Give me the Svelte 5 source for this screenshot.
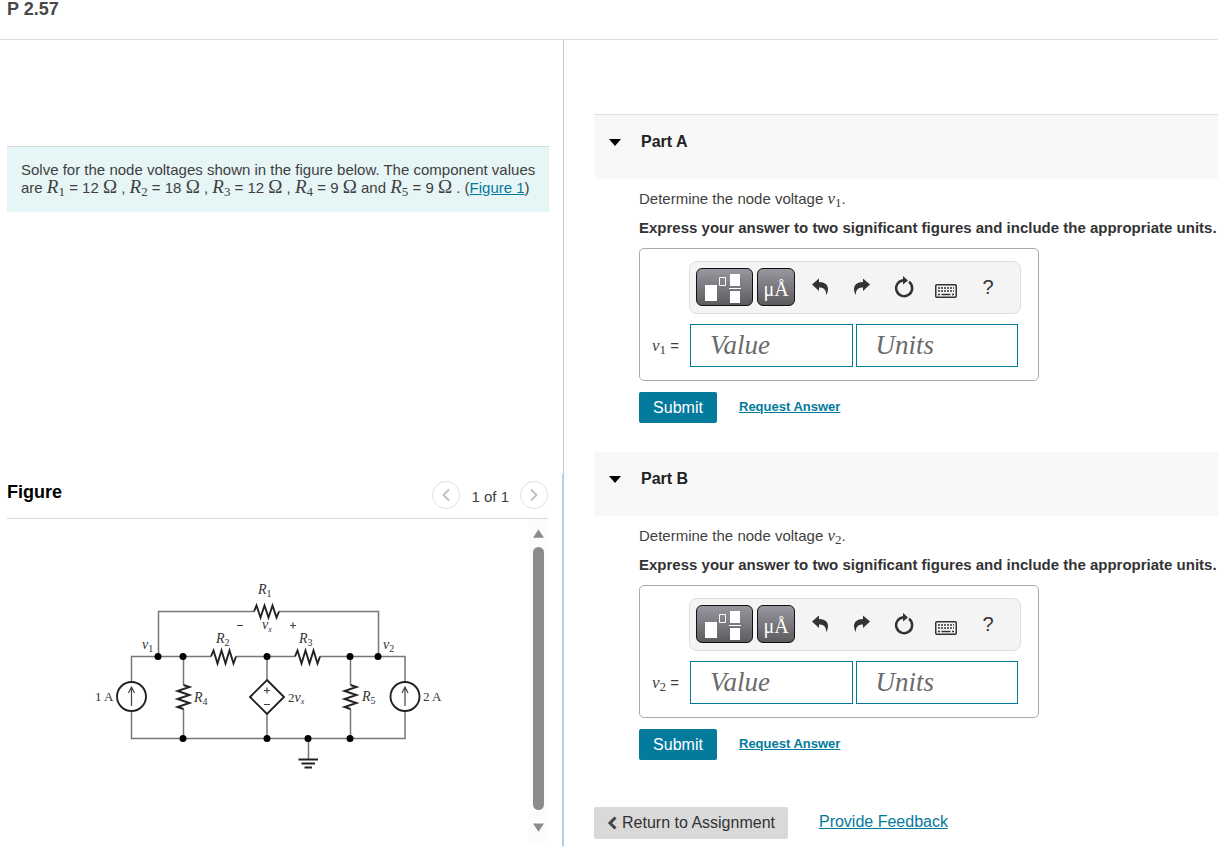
<script lang="ts">
  const components = [
    { index: 1, ohms: 12, after: ' , ' },
    { index: 2, ohms: 18, after: ' , ' },
    { index: 3, ohms: 12, after: ' , ' },
    { index: 4, ohms: 9, after: ' and ' },
    { index: 5, ohms: 9, after: ' . ' },
  ];

  const parts = [
    { letter: 'A', node: 1 },
    { letter: 'B', node: 2 },
  ];

  let open = $state([true, true]);
  let values = $state(['', '']);
  let units = $state(['', '']);

  const dots = [
    [158, 656], [183, 656], [267, 656], [350, 656], [378, 656],
    [183, 738], [267, 738], [308, 738], [350, 738],
  ];
</script>

<div class="page">
  <header><h1>P 2.57</h1></header>

  <div class="columns">
    <div class="left">
      <section class="problem">
        <p>
          Solve for the node voltages shown in the figure below. The component values are
          {#each components as c}<i class="math">R<sub>{c.index}</sub></i>{' = '}{c.ohms}{' '}<span class="ohm">Ω</span>{c.after}{/each}(<a href="#figure">Figure 1</a>)
        </p>
      </section>

      <section class="figure" id="figure">
        <div class="figure-head">
          <h2>Figure</h2>
          <div class="pager">
            <button aria-label="Previous figure"><svg width="10" height="14" viewBox="0 0 10 14"><path d="M8 1.5 2.5 7 8 12.5" /></svg></button>
            <span>1 of 1</span>
            <button aria-label="Next figure"><svg width="10" height="14" viewBox="0 0 10 14"><path d="M2 1.5 7.5 7 2 12.5" /></svg></button>
          </div>
        </div>
        <div class="figure-body">
          <svg class="circuit" width="360" height="200" viewBox="90 575 360 200" role="img" aria-label="Circuit diagram">
            <g class="wire">
              <path d="M158.500 656V611.500H254M279 611.500H378.500V656" />
              <path d="M131.500 682V656.500H211M236 656.500H295M320 656.500H405V682" />
              <path d="M131.500 711V738.500H405V711" />
              <path d="M183.500 656V685M183.500 709V738M350.500 656V685M350.500 709V738" />
              <path d="M267 656V680M267 714V738M308.500 738V759" />
            </g>
            <g class="part">
              <path d="M254 611.500l2.500-6 4 12 4-12 4 12 4-12 4 12 2.500-6" />
              <path d="M211 656.500l2.500-6 4 13 4-13 4 13 4-13 4 13 2.500-7" />
              <path d="M295 656.500l2.500-6 4 13 4-13 4 13 4-13 4 13 2.500-7" />
              <path d="M183.500 685l6 2-12 4 12 4-12 4 12 4-12 4 6 2" />
              <path d="M350.500 685l6 2-12 4 12 4-12 4 12 4-12 4 6 2" />
              <path d="M267 680 284 697 267 714 250 697Z" />
              <circle cx="131.500" cy="696.500" r="14.500" />
              <circle cx="405" cy="696.500" r="14.500" />
              <path d="M298.500 759.500H318M301.500 763.500H315M304.500 767.500H312" />
            </g>
            <g class="arrow">
              <path d="M131.500 706V687M128.500 693 131.500 687 134.500 693" />
              <path d="M405 706V687M402 693 405 687 408 693" />
              <path d="M237 625.500H243M290 625.500H296M293 622.500V628.500M264 690.500H270M267 687.500V693.500M264 704.500H270" />
            </g>
            {#each dots as [cx, cy]}<circle {cx} cy={cy + 0.5} r="3.500" />{/each}
            <g class="label">
              <text x="258" y="594">R<tspan class="sub" dy="3">1</tspan></text>
              <text x="216" y="643">R<tspan class="sub" dy="3">2</tspan></text>
              <text x="299" y="643">R<tspan class="sub" dy="3">3</tspan></text>
              <text x="194" y="702">R<tspan class="sub" dy="3">4</tspan></text>
              <text x="362" y="701">R<tspan class="sub" dy="3">5</tspan></text>
              <text x="142" y="649">v<tspan class="sub" dy="3">1</tspan></text>
              <text x="383" y="649">v<tspan class="sub" dy="3">2</tspan></text>
              <text x="262" y="629">v<tspan class="subx" dy="3">x</tspan></text>
              <text x="288" y="702"><tspan class="up">2</tspan>v<tspan class="subx" dy="2">x</tspan></text>
              <text x="95" y="701" class="up">1 A</text>
              <text x="423" y="701" class="up">2 A</text>
            </g>
          </svg>
          <div class="scrollbar" aria-hidden="true">
            <svg width="11" height="9" viewBox="0 0 12 9"><path d="M6 0 12 9H0Z" /></svg>
            <div class="thumb"></div>
            <svg width="11" height="9" viewBox="0 0 12 9"><path d="M0 0H12L6 9Z" /></svg>
          </div>
        </div>
      </section>
    </div>

    <main>
      {#each parts as part, i}
        <section class="question">
          <h2>
            <button aria-expanded={open[i]} onclick={() => (open[i] = !open[i])}>
              <svg width="12" height="7" viewBox="0 0 12 7"><path d="M0 0H12L6 7Z" /></svg>
              Part {part.letter}
            </button>
          </h2>
          {#if open[i]}
            <form class="answer" onsubmit={(e) => e.preventDefault()}>
              <p>Determine the node voltage <i class="node">v<sub>{part.node}</sub></i>.</p>
              <p class="instruction">Express your answer to two significant figures and include the appropriate units.</p>
              <div class="entry">
                <div class="toolbar">
                  <button type="button" class="dark templates" aria-label="Templates">
                    <svg width="55" height="36" viewBox="0 0 55 36">
                      <path fill="#fff" d="M8 16h12v16H8ZM33 5h10v12H33ZM32 19h12v1H32ZM33 22h10v12H33Z" />
                      <path fill="none" stroke="#fff" d="M22.5 8.5h6v8h-6Z" />
                    </svg>
                  </button>
                  <button type="button" class="dark symbols" aria-label="Symbols">μÅ</button>
                  <button type="button" class="tool" aria-label="Undo">
                    <svg width="18" height="18" viewBox="0 0 18 18"><path d="M1 6.500 8 .5V4C14 4 17 7 17 11 17 13.500 16 16 15 17 15.500 12 13 9.500 8 9.500V13Z" /></svg>
                  </button>
                  <button type="button" class="tool" aria-label="Redo">
                    <svg width="18" height="18" viewBox="0 0 18 18"><path d="M17 6.500 10 .5V4C4 4 1 7 1 11 1 13.500 2 16 3 17 2.500 12 5 9.500 10 9.500V13Z" /></svg>
                  </button>
                  <button type="button" class="tool" aria-label="Reset">
                    <svg width="20" height="22" viewBox="0 0 20 22"><path class="ring" d="M15 5.800A8 8 0 1 1 9.500 4.200" /><path d="M9 0 14 4.400 9 8.500Z" /></svg>
                  </button>
                  <button type="button" class="tool" aria-label="Keyboard shortcuts">
                    <svg class="keyboard" width="22" height="14" viewBox="0 0 22 14">
                      <rect x=".75" y=".75" width="20.500" height="12.500" rx="1" />
                      <path stroke-dasharray="2 1" d="M3 4H19M3 7H19" /><path d="M3 10.500H5M6.500 10.500H15.500M17 10.500H19" />
                    </svg>
                  </button>
                  <button type="button" class="tool help" aria-label="Help">?</button>
                </div>
                <div class="fields">
                  <label for="value-{part.letter}"><i class="node">v<sub>{part.node}</sub></i> =</label>
                  <input id="value-{part.letter}" placeholder="Value" bind:value={values[i]} />
                  <input aria-label="Units" placeholder="Units" bind:value={units[i]} />
                </div>
              </div>
              <div class="actions">
                <button class="submit">Submit</button>
                <a href="#request">Request Answer</a>
              </div>
            </form>
          {/if}
        </section>
      {/each}

      <footer>
        <button class="return"><svg width="10" height="14" viewBox="0 0 10 14"><path d="M8.500 1.500 3 7 8.500 12.500" /></svg>Return to Assignment</button>
        <a href="#feedback">Provide Feedback</a>
      </footer>
    </main>
  </div>
</div>

<style>
  :global(body) { margin: 0; background: #fff; }
  .page { display: flex; flex-direction: column; height: 100vh; overflow: hidden; color: #3f3f3f; font: 15px/18px "Liberation Sans", Arial, sans-serif; }
  h1, h2, p { margin: 0; }
  button { padding: 0; border: 0; background: none; color: inherit; font: inherit; cursor: pointer; }
  a { color: #047a9c; }
  sub { font-style: normal; line-height: 0; vertical-align: -3px; }

  header { flex: none; height: 39px; padding-left: 7px; border-bottom: 1px solid #dedede; }
  h1 { color: #484848; font-size: 18px; line-height: 18px; }

  .columns { display: flex; flex: 1; min-height: 0; }
  .left { display: flex; flex: 0 0 564px; flex-direction: column; min-width: 0; }
  .problem { flex: 0 0 434px; box-sizing: border-box; padding: 106px 14px 0 7px; border-right: 1px solid #c2c7d0; }
  .problem p { padding: 14px 6px 15px 14px; border-top: 1px solid #d5dbdb; background: #e6f5f6; }
  .math, .ohm { font-family: "Liberation Serif", "Times New Roman", serif; font-size: 19px; line-height: 0; }
  .math sub { font-size: 13px; }

  .figure { display: flex; flex: 1; flex-direction: column; min-height: 0; padding: 0 14px 4px 7px; border-right: 2px solid #b8cce0; }
  .figure-head { display: flex; align-items: center; justify-content: space-between; height: 44px; border-bottom: 1px solid #dadada; }
  h2 { color: #222; font-size: 16px; line-height: 20px; }
  .figure h2 { padding-bottom: 8px; color: #000; font-size: 18px; }
  .pager { display: flex; align-items: center; gap: 11px; padding-bottom: 2px; }
  .pager button { display: flex; align-items: center; justify-content: center; width: 28px; height: 28px; border: 1px solid #e0e0e0; border-radius: 50%; }
  .pager span { padding-top: 3px; }
  .pager path { fill: none; stroke: #c2c2c2; stroke-width: 2; }
  .figure-body { display: flex; flex: 1; justify-content: space-between; min-height: 0; }
  .circuit { flex: none; margin: 56px 0 0 83px; }
  .wire { fill: none; stroke: #777; stroke-width: 1.5; }
  .part { fill: none; stroke: #222; stroke-width: 1.9; }
  .arrow { fill: none; stroke: #444; stroke-width: 1.2; }
  .label { fill: #333; font: italic 14px "Liberation Serif", "Times New Roman", serif; }
  .sub { font-size: 10px; font-style: normal; }
  .subx { font-size: 8px; }
  .up { font-size: 13px; font-style: normal; }
  .scrollbar { display: flex; flex: none; flex-direction: column; align-items: center; gap: 9px; width: 19px; box-sizing: border-box; padding: 10px 0; background: #fcfcfc; }
  .scrollbar svg { flex: none; fill: #8b8b8b; }
  .thumb { flex: 1; width: 11px; margin-bottom: 4px; border-radius: 6px; background: #8b8b8b; }

  main { flex: 1; min-width: 0; padding: 74px 0 0 30px; }
  .question:first-child h2 { border-top: 1px solid #dedede; }
  .question h2 { height: 64px; background: #f8f8f8; }
  .question h2 button { display: flex; align-items: center; gap: 20px; padding: 17px 15px; font-weight: bold; }
  .answer { padding: 11px 0 29px 45px; white-space: nowrap; }
  .node { font-family: "Liberation Serif", "Times New Roman", serif; font-size: 17px; line-height: 0; }
  .node sub { font-size: 13px; }
  .instruction { margin: 11px 0; color: #333; font-weight: bold; }
  .entry { box-sizing: border-box; width: 400px; padding: 12px 17px 13px 12px; border: 1px solid #aaa; border-radius: 5px; }
  .toolbar { display: flex; align-items: center; box-sizing: border-box; height: 53px; margin-left: 37px; padding: 0 0 1px 6px; border: 1px solid #ddd; border-radius: 8px; background: #f4f4f4; }
  .dark { height: 38px; box-sizing: border-box; border: 1px solid #111; border-radius: 6px; background: linear-gradient(#99979f, #5c5c5f); color: #fff; }
  .templates { display: flex; align-items: center; justify-content: center; width: 57px; }
  .symbols { width: 38px; margin: 0 4px; padding-top: 4px; font: 20px/32px "Liberation Serif", "Times New Roman", serif; }
  .tool { display: flex; align-items: center; justify-content: center; width: 42px; height: 38px; fill: #333; }
  .ring { fill: none; stroke: #333; stroke-width: 2.5; }
  .keyboard { margin-top: 7px; fill: none; stroke: #333; stroke-width: 1.5; }
  .help { color: #333; font-size: 20px; }
  .fields { display: flex; align-items: center; gap: 3px; margin: 10px 3px 0 0; }
  .fields label { width: 35px; }
  input { flex: 1; box-sizing: border-box; min-width: 0; height: 43px; padding: 0 19px; border: 1px solid #047a9c; border-radius: 0; color: #333; font: italic 27px "Liberation Serif", "Times New Roman", serif; }
  input::placeholder { color: #6a6a6a; opacity: 1; }
  .actions { display: flex; align-items: center; gap: 22px; margin-top: 11px; }
  .submit { width: 78px; height: 31px; border-radius: 2px; background: #047a9c; color: #fff; font-size: 16px; }
  .actions a { padding-bottom: 2px; font-size: 13px; font-weight: bold; }
  footer { display: flex; align-items: center; gap: 31px; margin-top: 18px; font-size: 16px; }
  footer a { padding-bottom: 2px; }
  .return { display: flex; align-items: center; gap: 5px; height: 32px; padding: 0 13px; border-radius: 2px; background: #d9d9d9; color: #333; }
  .return path { fill: none; stroke: #444; stroke-width: 3; }
</style>
